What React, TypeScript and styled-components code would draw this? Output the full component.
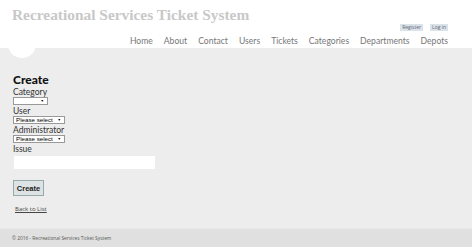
import React from "react";
import styled, { createGlobalStyle } from "styled-components";

const GlobalStyle = createGlobalStyle`
  html, body {
    margin: 0;
    padding: 0;
    background: #fff;
    font-family: "Lato", "Open Sans", sans-serif;
  }
`;

const Page = styled.div`
  width: 474px;
  height: 248px;
  position: relative;
  overflow: hidden;
`;

const Header = styled.header`
  height: 48px;
  position: relative;
`;

const SiteTitle = styled.div`
  position: absolute;
  left: 12px;
  top: 6px;
  font-family: "Liberation Serif", serif;
  font-weight: bold;
  font-size: 15.4px;
  color: #c8c8c8;
  white-space: nowrap;
`;

const LoginBar = styled.div`
  position: absolute;
  right: 26px;
  top: 24px;
  display: flex;
  gap: 7px;
`;

const LoginLink = styled.span`
  background: #dbe3ea;
  color: #667;
  font-family: "Open Sans", sans-serif;
  font-size: 5px;
  padding: 0 2px;
  line-height: 7px;
`;

const Nav = styled.nav`
  position: absolute;
  right: 26px;
  top: 34px;
  display: flex;
  gap: 11px;
`;

const NavItem = styled.span`
  color: #777;
  font-size: 8.6px;
  line-height: 14px;
`;

const Circle = styled.div`
  position: absolute;
  left: 8px;
  top: 30px;
  width: 28px;
  height: 28px;
  border-radius: 50%;
  background: #fff;
  z-index: 2;
`;

const Main = styled.main`
  height: 180px;
  width: 472px;
  background: #ededed;
  padding: 25px 0 0 13px;
  box-sizing: border-box;
  color: #222;
`;

const Heading = styled.h2`
  margin: 0;
  font-size: 12px;
  font-weight: 900;
  line-height: 14px;
  color: #111;
`;

const Label = styled.div`
  font-size: 8.5px;
  line-height: 10px;
  color: #333;
`;

const Select = styled.div<{ w: number }>`
  width: ${(p) => p.w}px;
  height: 8px;
  background: #fff;
  border: 1px solid #999;
  box-sizing: border-box;
  font-family: "Liberation Sans", sans-serif;
  font-size: 6.2px;
  line-height: 6px;
  padding-left: 2px;
  display: flex;
  align-items: center;
  color: #000;
  margin-bottom: 1px;

  &::after {
    content: "▼";
    margin-left: auto;
    font-size: 3.5px;
    padding-right: 3px;
  }
`;

const Input = styled.div`
  width: 141px;
  height: 13px;
  background: #fff;
  margin: 2px 0 0 1px;
`;

const Button = styled.div`
  margin-top: 11px;
  width: 31px;
  height: 16px;
  background: #dde2e5;
  border: 1px solid #9aa;
  box-sizing: border-box;
  font-size: 7.5px;
  font-weight: bold;
  display: flex;
  align-items: center;
  justify-content: center;
  color: #222;
  font-family: "Liberation Sans", sans-serif;
`;

const BackLink = styled.div`
  margin: 9px 0 0 2px;
  font-family: "Open Sans", sans-serif;
  font-size: 6px;
  text-decoration: underline;
  color: #444;
`;

const Spacer = styled.div`
  height: 1px;
  width: 472px;
  background: #e8e8e8;
`;

const Footer = styled.footer`
  height: 18px;
  width: 472px;
  background: #e0e0e0;
  display: flex;
  align-items: center;
  padding-left: 12px;
  box-sizing: border-box;
  font-family: "Open Sans", sans-serif;
  font-size: 4.8px;
  color: #555;
`;

const navItems = ["Home", "About", "Contact", "Users", "Tickets", "Categories", "Departments", "Depots"];

export default function App() {
  return (
    <Page>
      <GlobalStyle />
      <Header>
        <SiteTitle>Recreational Services Ticket System</SiteTitle>
        <LoginBar>
          <LoginLink>Register</LoginLink>
          <LoginLink>Log in</LoginLink>
        </LoginBar>
        <Nav>
          {navItems.map((n) => (
            <NavItem key={n}>{n}</NavItem>
          ))}
        </Nav>
      </Header>
      <Circle />
      <Main>
        <Heading>Create</Heading>
        <Label>Category</Label>
        <Select w={35} />
        <Label>User</Label>
        <Select w={52}>Please select</Select>
        <Label>Administrator</Label>
        <Select w={52}>Please select</Select>
        <Label>Issue</Label>
        <Input />
        <Button>Create</Button>
        <BackLink>Back to List</BackLink>
      </Main>
      <Spacer />
      <Footer>© 2016 - Recreational Services Ticket System</Footer>
    </Page>
  );
}
